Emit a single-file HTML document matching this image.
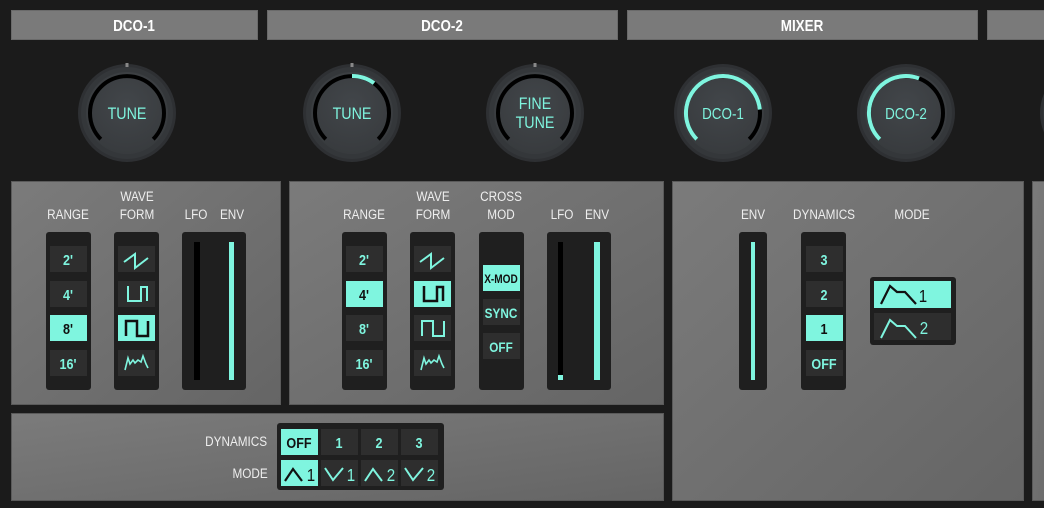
<!DOCTYPE html>
<html><head><meta charset="utf-8"><style>
html,body{margin:0;padding:0;background:#1b1b1b;overflow:hidden}
svg{display:block}
text{font-family:"Liberation Sans",sans-serif;transform-box:fill-box;transform-origin:center;transform:scaleX(.84)}
</style></head><body>
<svg width="1044" height="508" viewBox="0 0 1044 508" xmlns="http://www.w3.org/2000/svg">
<defs>
<linearGradient id="pg" x1="0" y1="0" x2="1" y2="1"><stop offset="0" stop-color="#7b7b7b"/><stop offset="1" stop-color="#656565"/></linearGradient>
<radialGradient id="kf" cx="0.5" cy="0.4" r="0.6"><stop offset="0" stop-color="#42464a"/><stop offset="1" stop-color="#383b3e"/></radialGradient>
</defs>
<rect width="1044" height="508" fill="#1b1b1b"/>
<g fill="#7a7a7a" stroke="#6a6a6a">
<rect x="11.5" y="10.5" width="246" height="29"/>
<rect x="267.5" y="10.5" width="350" height="29"/>
<rect x="627.5" y="10.5" width="350" height="29"/>
<rect x="987.5" y="10.5" width="70" height="29"/>
</g>
<g fill="#fff" font-weight="bold" font-size="16" text-anchor="middle">
<text x="134" y="31">DCO-1</text><text x="442" y="31">DCO-2</text><text x="802" y="31">MIXER</text>
</g>
<g>
<g transform="translate(127,113)">
<circle r="49" fill="#2e3033"/><circle r="46" fill="#34373a"/><circle r="41" fill="url(#kf)"/>
<path d="M-26.2 26.2 A37 37 0 1 1 26.2 26.2" fill="none" stroke="#000" stroke-width="4"/>
<rect x="-1.5" y="-50" width="3" height="4" fill="#888"/>
<text y="6" fill="#7ff5df" font-size="17" text-anchor="middle">TUNE</text></g>
<g transform="translate(352,113)">
<circle r="49" fill="#2e3033"/><circle r="46" fill="#34373a"/><circle r="41" fill="url(#kf)"/>
<path d="M-26.2 26.2 A37 37 0 1 1 26.2 26.2" fill="none" stroke="#000" stroke-width="4"/>
<path d="M0 -37 A37 37 0 0 1 22 -29.8" fill="none" stroke="#7ff5df" stroke-width="4"/>
<rect x="-1.5" y="-50" width="3" height="4" fill="#888"/>
<text y="6" fill="#7ff5df" font-size="17" text-anchor="middle">TUNE</text></g>
<g transform="translate(535,113)">
<circle r="49" fill="#2e3033"/><circle r="46" fill="#34373a"/><circle r="41" fill="url(#kf)"/>
<path d="M-26.2 26.2 A37 37 0 1 1 26.2 26.2" fill="none" stroke="#000" stroke-width="4"/>
<rect x="-1.5" y="-50" width="3" height="4" fill="#888"/>
<text y="-4" fill="#7ff5df" font-size="17" text-anchor="middle">FINE</text>
<text y="15" fill="#7ff5df" font-size="17" text-anchor="middle">TUNE</text></g>
<g transform="translate(723,113)">
<circle r="49" fill="#2e3033"/><circle r="46" fill="#34373a"/><circle r="41" fill="url(#kf)"/>
<path d="M-26.2 26.2 A37 37 0 1 1 26.2 26.2" fill="none" stroke="#000" stroke-width="4"/>
<path d="M-26.2 26.2 A37 37 0 1 1 36.8 -3.5" fill="none" stroke="#7ff5df" stroke-width="4"/>
<text y="6" fill="#7ff5df" font-size="16" text-anchor="middle">DCO-1</text></g>
<g transform="translate(906,113)">
<circle r="49" fill="#2e3033"/><circle r="46" fill="#34373a"/><circle r="41" fill="url(#kf)"/>
<path d="M-26.2 26.2 A37 37 0 1 1 26.2 26.2" fill="none" stroke="#000" stroke-width="4"/>
<path d="M-26.2 26.2 A37 37 0 0 1 13 -34.6" fill="none" stroke="#7ff5df" stroke-width="4"/>
<text y="6" fill="#7ff5df" font-size="16" text-anchor="middle">DCO-2</text></g>
<g transform="translate(1089,113)">
<circle r="49" fill="#2e3033"/><circle r="46" fill="#34373a"/><circle r="41" fill="url(#kf)"/>
<path d="M-26.2 26.2 A37 37 0 1 1 26.2 26.2" fill="none" stroke="#7ff5df" stroke-width="4"/></g>
</g>
<g fill="url(#pg)" stroke="#5a5a5a">
<rect x="11.5" y="181.5" width="269" height="223"/>
<rect x="289.5" y="181.5" width="374" height="223"/>
<rect x="11.5" y="413.5" width="652" height="87"/>
<rect x="672.5" y="181.5" width="351" height="319"/>
<rect x="1032.5" y="181.5" width="40" height="319"/>
</g>
<g fill="#eee" font-size="14" text-anchor="middle">
<text x="68" y="219">RANGE</text><text x="137" y="201">WAVE</text><text x="137" y="219">FORM</text>
<text x="196" y="219">LFO</text><text x="232" y="219">ENV</text>
<text x="364" y="219">RANGE</text><text x="433" y="201">WAVE</text><text x="433" y="219">FORM</text>
<text x="501" y="201">CROSS</text><text x="501" y="219">MOD</text>
<text x="562" y="219">LFO</text><text x="597" y="219">ENV</text>
<text x="753" y="219">ENV</text><text x="824" y="219">DYNAMICS</text><text x="912" y="219">MODE</text>
<text x="273" y="446" text-anchor="end">DYNAMICS</text><text x="271" y="478" text-anchor="end">MODE</text>
</g>
<g fill="#1f1f1f">
<rect x="46" y="232" width="45" height="158" rx="3"/><rect x="114" y="232" width="45" height="158" rx="3"/>
<rect x="182" y="232" width="64" height="158" rx="3"/>
<rect x="342" y="232" width="45" height="158" rx="3"/><rect x="410" y="232" width="45" height="158" rx="3"/>
<rect x="479" y="232" width="45" height="158" rx="3"/><rect x="547" y="232" width="64" height="158" rx="3"/>
<rect x="739" y="232" width="28" height="158" rx="3"/><rect x="801" y="232" width="45" height="158" rx="3"/>
<rect x="870" y="277" width="86" height="68" rx="3"/>
<rect x="277" y="423" width="167" height="67" rx="3"/>
</g>
<rect x="194" y="242" width="6" height="138" fill="#000"/><rect x="229" y="242" width="5" height="138" fill="#7ff5df"/>
<rect x="558" y="242" width="5" height="138" fill="#000"/><rect x="558" y="375" width="5" height="5" fill="#7ff5df"/>
<rect x="594" y="242" width="6" height="138" fill="#7ff5df"/>
<rect x="751" y="242" width="4" height="138" fill="#7ff5df"/>
<g font-size="15" text-anchor="middle" font-weight="bold">
<rect x="50" y="246" width="37" height="26" fill="#2e2e2e"/><text x="68" y="265" fill="#7ff5df">2'</text>
<rect x="50" y="281" width="37" height="26" fill="#2e2e2e"/><text x="68" y="300" fill="#7ff5df">4'</text>
<rect x="50" y="315" width="37" height="26" fill="#7ff5df"/><text x="68" y="334" fill="#111">8'</text>
<rect x="50" y="350" width="37" height="26" fill="#2e2e2e"/><text x="68" y="369" fill="#7ff5df">16'</text>
<rect x="346" y="246" width="37" height="26" fill="#2e2e2e"/><text x="364" y="265" fill="#7ff5df">2'</text>
<rect x="346" y="281" width="37" height="26" fill="#7ff5df"/><text x="364" y="300" fill="#111">4'</text>
<rect x="346" y="315" width="37" height="26" fill="#2e2e2e"/><text x="364" y="334" fill="#7ff5df">8'</text>
<rect x="346" y="350" width="37" height="26" fill="#2e2e2e"/><text x="364" y="369" fill="#7ff5df">16'</text>
<rect x="483" y="265" width="37" height="26" fill="#7ff5df"/><text x="501" y="283" fill="#111" font-size="12">X-MOD</text>
<rect x="483" y="299" width="37" height="26" fill="#2e2e2e"/><text x="501" y="318" fill="#7ff5df" font-size="14">SYNC</text>
<rect x="483" y="333" width="37" height="26" fill="#2e2e2e"/><text x="501" y="352" fill="#7ff5df" font-size="14">OFF</text>
<rect x="806" y="246" width="37" height="26" fill="#2e2e2e"/><text x="824" y="265" fill="#7ff5df">3</text>
<rect x="806" y="281" width="37" height="26" fill="#2e2e2e"/><text x="824" y="300" fill="#7ff5df">2</text>
<rect x="806" y="315" width="37" height="26" fill="#7ff5df"/><text x="824" y="334" fill="#111">1</text>
<rect x="806" y="350" width="37" height="26" fill="#2e2e2e"/><text x="824" y="369" fill="#7ff5df">OFF</text>
<rect x="281" y="429" width="37" height="26" fill="#7ff5df"/><text x="299" y="448" fill="#111">OFF</text>
<rect x="321" y="429" width="37" height="26" fill="#2e2e2e"/><text x="339" y="448" fill="#7ff5df">1</text>
<rect x="361" y="429" width="37" height="26" fill="#2e2e2e"/><text x="379" y="448" fill="#7ff5df">2</text>
<rect x="401" y="429" width="37" height="26" fill="#2e2e2e"/><text x="419" y="448" fill="#7ff5df">3</text>
<rect x="281" y="460" width="37" height="26" fill="#7ff5df"/>
<rect x="321" y="460" width="37" height="26" fill="#2e2e2e"/>
<rect x="361" y="460" width="37" height="26" fill="#2e2e2e"/>
<rect x="401" y="460" width="37" height="26" fill="#2e2e2e"/>
<g font-weight="normal" font-size="18">
<text x="311" y="481" fill="#111">1</text><text x="351" y="481" fill="#7ff5df">1</text>
<text x="391" y="481" fill="#7ff5df">2</text><text x="431" y="481" fill="#7ff5df">2</text>
</g>
<rect x="874" y="281" width="77" height="27" fill="#7ff5df"/>
<rect x="874" y="313" width="77" height="27" fill="#2e2e2e"/>
<g font-weight="normal" font-size="18">
<text x="923" y="302" fill="#111">1</text><text x="924" y="334" fill="#7ff5df">2</text></g>
</g>
<g>
<rect x="118" y="246" width="37" height="26" fill="#2e2e2e"/><rect x="118" y="281" width="37" height="26" fill="#2e2e2e"/>
<rect x="118" y="315" width="37" height="26" fill="#7ff5df"/><rect x="118" y="350" width="37" height="26" fill="#2e2e2e"/>
<rect x="414" y="246" width="37" height="26" fill="#2e2e2e"/><rect x="414" y="281" width="37" height="26" fill="#7ff5df"/>
<rect x="414" y="315" width="37" height="26" fill="#2e2e2e"/><rect x="414" y="350" width="37" height="26" fill="#2e2e2e"/>
</g>
<g fill="none" stroke-width="2" stroke-linejoin="miter">
<path d="M124 262 L135 254 L135 268 L148 258" stroke="#7ff5df"/>
<path d="M128 286 L128 301 L141 301 L141 287 L147 287 L147 301" stroke="#7ff5df"/>
<path d="M126 336 L126 321 L137 321 L137 336 L148 336 L148 321" stroke="#111" stroke-width="2.5"/>
<path d="M125 370 L128 358 L130 364 L133 360 L135 363 L138 360 L141 362 L143 356 L146 364 L148 368" stroke="#7ff5df" stroke-width="1.6"/>
<path d="M420 262 L431 254 L431 268 L444 258" stroke="#7ff5df"/>
<path d="M424 286 L424 301 L437 301 L437 287 L443 287 L443 301" stroke="#111" stroke-width="2.5"/>
<path d="M422 336 L422 321 L433 321 L433 336 L444 336 L444 321" stroke="#7ff5df"/>
<path d="M421 370 L424 358 L426 364 L429 360 L431 363 L434 360 L437 362 L439 356 L442 364 L444 368" stroke="#7ff5df" stroke-width="1.6"/>
<path d="M285 481 L293 469 L302 481" stroke="#111" stroke-width="2.2"/>
<path d="M325 468 L333 480 L343 468" stroke="#7ff5df"/>
<path d="M365 481 L373 469 L382 481" stroke="#7ff5df"/>
<path d="M405 468 L413 480 L423 468" stroke="#7ff5df"/>
<path d="M881 304 L890 286 L897 292 L905 292 L916 304" stroke="#111" stroke-width="2.2"/>
<path d="M881 338 L890 320 L897 326 L905 326 L916 338" stroke="#7ff5df"/>
</g>
</svg>
</body></html>
